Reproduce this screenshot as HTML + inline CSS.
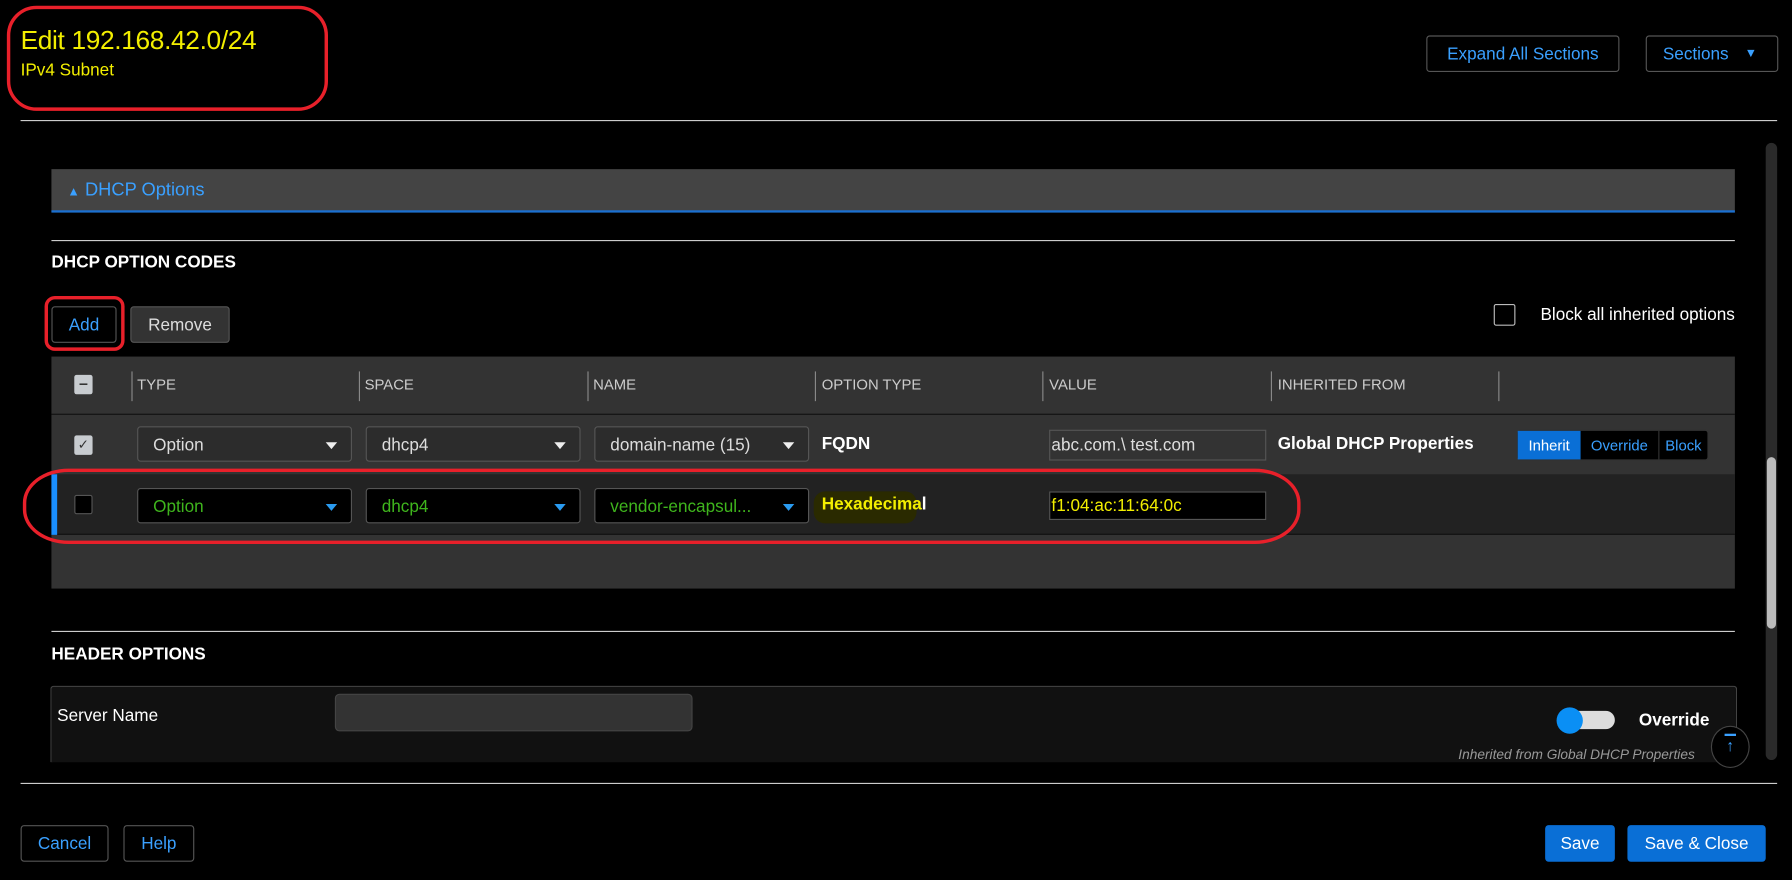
<!DOCTYPE html>
<html><head><meta charset="utf-8"><style>
html,body{margin:0;padding:0;background:#000;width:1792px;height:880px;overflow:hidden}
#w{position:absolute;left:0;top:0;width:1568px;height:770px;transform:scale(1.142857);transform-origin:0 0;font-family:"Liberation Sans",sans-serif;color:#fff}
.a{position:absolute;box-sizing:border-box}
.line{position:absolute;height:1px;background:#ccc}
.btn{position:absolute;box-sizing:border-box;border:1px solid #555;border-radius:3px;color:#3aa0ff;font-size:15px;display:flex;align-items:center;justify-content:center;background:#000}
.hd{position:absolute;top:329px;font-size:13px;color:#ccc}
.sep{position:absolute;top:325px;width:1px;height:26px;background:#888}
.sel{position:absolute;box-sizing:border-box;height:31px;width:188px;border:1px solid #555;border-radius:3px;background:#2c2c2c;font-size:15px;color:#ddd;padding:7px 0 0 13px}
.sel:after{content:"";position:absolute;right:12px;top:13px;border-left:5px solid transparent;border-right:5px solid transparent;border-top:6px solid #eee}
.sel.g{background:#000;color:#3fb51d}
.sel.g:after{border-top-color:#2a9bf0}
.cb{position:absolute;left:65px;width:16px;height:17px;box-sizing:border-box;border-radius:2px}
</style></head><body><div id="w">
<div class="a" style="left:18px;top:22px;font-size:23px;color:#f2ee00;letter-spacing:-0.3px">Edit 192.168.42.0/24</div>
<div class="a" style="left:18px;top:53px;font-size:15px;color:#f2ee00">IPv4 Subnet</div>
<div class="a" style="left:6px;top:5px;width:281px;height:92px;border:3px solid #e8202a;border-radius:26px"></div>
<div class="btn" style="left:1248px;top:31px;width:169px;height:32px">Expand All Sections</div>
<div class="btn" style="left:1440px;top:31px;width:116px;height:32px;justify-content:flex-start;padding-left:14px">Sections<span style="margin-left:14px;font-size:11px">▼</span></div>
<div class="line" style="left:18px;top:105px;width:1537px"></div>
<div class="a" style="left:1545px;top:125px;width:10px;height:540px;background:#2a2a2a;border-radius:5px"></div>
<div class="a" style="left:1546px;top:400px;width:8px;height:150px;background:#bbb;border-radius:4px"></div>
<div class="a" style="left:45px;top:148px;width:1473px;height:38px;background:#444;border-bottom:2px solid #1a6fd0;color:#3aa0ff;font-size:16px;padding:10px 0 0 14px"><span style="font-size:11px">▲</span> DHCP Options</div>
<div class="line" style="left:45px;top:210px;width:1473px"></div>
<div class="a" style="left:45px;top:221px;font-size:15px;font-weight:bold">DHCP OPTION CODES</div>
<div class="btn" style="left:45px;top:268px;width:57px;height:32px">Add</div>
<div class="a" style="left:39px;top:259px;width:70px;height:48px;border:3px solid #e8202a;border-radius:9px"></div>
<div class="btn" style="left:114px;top:268px;width:87px;height:32px;background:#333;color:#ddd">Remove</div>
<div class="a" style="left:1307px;top:266px;width:19px;height:19px;border:1px solid #bbb;border-radius:2px"></div>
<div class="a" style="left:1332px;top:267px;font-size:15px;width:186px;text-align:right">Block all inherited options</div>
<div class="a" style="left:45px;top:312px;width:1473px;height:203px;background:#333"></div>
<div class="a" style="left:45px;top:362px;width:1473px;height:1px;background:#111"></div>
<div class="cb" style="top:328px;background:#c8ccd0;color:#333;font-size:14px;text-align:center;line-height:15px;font-weight:bold">–</div>
<div class="sep" style="left:115px"></div><div class="sep" style="left:314px"></div><div class="sep" style="left:514px"></div><div class="sep" style="left:713px"></div><div class="sep" style="left:912px"></div><div class="sep" style="left:1112px"></div><div class="sep" style="left:1311px"></div>
<div class="hd" style="left:120px">TYPE</div><div class="hd" style="left:319px">SPACE</div><div class="hd" style="left:519px">NAME</div><div class="hd" style="left:719px">OPTION TYPE</div><div class="hd" style="left:918px">VALUE</div><div class="hd" style="left:1118px">INHERITED FROM</div>
<div class="cb" style="top:381px;background:#c8ccd0;color:#333;font-size:12px;text-align:center;line-height:16px">✓</div>
<div class="sel" style="left:120px;top:373px">Option</div>
<div class="sel" style="left:320px;top:373px">dhcp4</div>
<div class="sel" style="left:520px;top:373px">domain-name (15)</div>
<div class="a" style="left:719px;top:380px;font-size:15px;font-weight:bold">FQDN</div>
<div class="a" style="left:918px;top:376px;width:190px;height:27px;border:1px solid #555;font-size:15px;color:#ddd;padding:4px 0 0 1px">abc.com.\ test.com</div>
<div class="a" style="left:1118px;top:380px;font-size:15px;font-weight:bold">Global DHCP Properties</div>
<div class="a" style="left:1327px;top:376px;width:168px;height:27px;background:#000;border:1px solid #333;border-radius:3px;font-size:13px;display:flex">
<div style="width:55px;background:#0a6fd6;display:flex;align-items:center;justify-content:center">Inherit</div>
<div style="width:68px;color:#3aa0ff;display:flex;align-items:center;justify-content:center;border-right:1px solid #333">Override</div>
<div style="flex:1;color:#3aa0ff;display:flex;align-items:center;justify-content:center">Block</div></div>
<div class="a" style="left:45px;top:415px;width:1473px;height:53px;background:#222;border-bottom:1px solid #111"></div>
<div class="a" style="left:45px;top:415px;width:5px;height:53px;background:#1a8fff"></div>
<div class="cb" style="top:433px;background:#000;border:1px solid #555"></div>
<div class="sel g" style="left:120px;top:427px">Option</div>
<div class="sel g" style="left:320px;top:427px">dhcp4</div>
<div class="sel g" style="left:520px;top:427px">vendor-encapsul...</div>
<div class="a" style="left:712px;top:430px;width:90px;height:28px;background:#2a2a00;border-radius:10px"></div>
<div class="a" style="left:719px;top:433px;font-size:15px;font-weight:bold;color:#f2ee00">Hexadecima<span style="color:#fff">l</span></div>
<div class="a" style="left:918px;top:430px;width:190px;height:25px;border:1px solid #555;background:#000;font-size:15px;color:#f2ee00;padding:3px 0 0 1px">f1:04:ac:11:64:0c</div>
<div class="a" style="left:20px;top:410px;width:1118px;height:66px;border:3px solid #e8202a;border-radius:40px/30px"></div>
<div class="line" style="left:45px;top:552px;width:1473px"></div>
<div class="a" style="left:45px;top:564px;font-size:15px;font-weight:bold">HEADER OPTIONS</div>
<div class="a" style="left:44px;top:600px;width:1476px;height:67px;background:#111;border:1px solid #444;border-bottom:none;border-radius:3px 3px 0 0"></div>
<div class="a" style="left:50px;top:618px;font-size:15px">Server Name</div>
<div class="a" style="left:293px;top:607px;width:313px;height:33px;background:#333;border:1px solid #444;border-radius:4px"></div>
<div class="a" style="left:1368px;top:622px;width:45px;height:16px;background:#ddd;border-radius:8px"></div>
<div class="a" style="left:1362px;top:619px;width:23px;height:23px;background:#0a8ff5;border-radius:50%"></div>
<div class="a" style="left:1434px;top:622px;font-size:15px;font-weight:bold">Override</div>
<div class="a" style="left:1276px;top:653px;font-size:12px;font-style:italic;color:#999">Inherited from Global DHCP Properties</div>
<div class="a" style="left:1497px;top:635px;width:34px;height:37px;background:#000;border:1px solid #444;border-radius:50%;color:#3aa0ff;font-size:14px;text-align:center;line-height:14px;padding-top:6px"><div style="width:10px;height:2px;background:#3aa0ff;margin:0 auto 1px"></div>↑</div>
<div class="line" style="left:18px;top:685px;width:1537px"></div>
<div class="btn" style="left:18px;top:722px;width:77px;height:32px">Cancel</div>
<div class="btn" style="left:108px;top:722px;width:62px;height:32px">Help</div>
<div class="btn" style="left:1352px;top:722px;width:61px;height:32px;background:#0a6fd6;border-color:#0a6fd6;color:#fff">Save</div>
<div class="btn" style="left:1424px;top:722px;width:121px;height:32px;background:#0a6fd6;border-color:#0a6fd6;color:#fff">Save &amp; Close</div>
</div></body></html>
